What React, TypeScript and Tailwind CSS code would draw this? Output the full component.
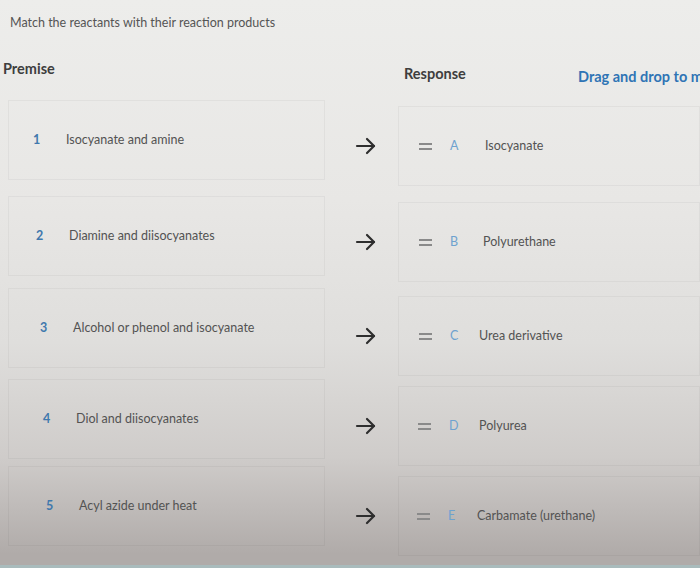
import React from "react";

type Row = {
  n: string;
  premise: string;
  letter: string;
  response: string;
  rowH: string;
  prePl: string;
  respMt: string;
  eqPl: string;
  letterW: string;
};

const rows: Row[] = [
  { n: "1", premise: "Isocyanate and amine", letter: "A", response: "Isocyanate", rowH: "h-[96px]", prePl: "pl-[24px]", respMt: "mt-[6px]", eqPl: "pl-[20px]", letterW: "w-[35px]" },
  { n: "2", premise: "Diamine and diisocyanates", letter: "B", response: "Polyurethane", rowH: "h-[92px]", prePl: "pl-[27px]", respMt: "mt-[6px]", eqPl: "pl-[20px]", letterW: "w-[33px]" },
  { n: "3", premise: "Alcohol or phenol and isocyanate", letter: "C", response: "Urea derivative", rowH: "h-[91px]", prePl: "pl-[31px]", respMt: "mt-[8px]", eqPl: "pl-[20px]", letterW: "w-[29px]" },
  { n: "4", premise: "Diol and diisocyanates", letter: "D", response: "Polyurea", rowH: "h-[87px]", prePl: "pl-[34px]", respMt: "mt-[7px]", eqPl: "pl-[19px]", letterW: "w-[30px]" },
  { n: "5", premise: "Acyl azide under heat", letter: "E", response: "Carbamate (urethane)", rowH: "h-[80px]", prePl: "pl-[37px]", respMt: "mt-[10px]", eqPl: "pl-[18px]", letterW: "w-[29px]" },
];

function Arrow() {
  return (
    <svg width="22" height="20" viewBox="0 0 22 20" fill="none" stroke="#2e2e2e" strokeWidth="2.2" strokeLinecap="round" strokeLinejoin="round">
      <line x1="2" y1="10" x2="19" y2="10" />
      <polyline points="12,3 19,10 12,17" />
    </svg>
  );
}

function Handle() {
  return (
    <div className="flex flex-col gap-[3px] w-[13px]">
      <div className="h-[2px] bg-[#8a8a8a]" />
      <div className="h-[2px] bg-[#8a8a8a]" />
    </div>
  );
}

export default function App() {
  return (
    <div
      className="w-[700px] h-[571px] overflow-hidden flex flex-col bg-[linear-gradient(180deg,#ededeb_0%,#e8e7e5_35%,#dfdedc_60%,#cfccca_80%,#b0aba9_97%)] text-[#555]"
      style={{ fontFamily: "Lato, 'Open Sans', sans-serif" }}
    >
      <div className="pl-[10px] pt-[15px] text-[12.5px] leading-[16px] text-[#555]">
        Match the reactants with their reaction products
      </div>

      <div className="flex items-start mt-[29px] whitespace-nowrap font-bold text-[14.5px] leading-[18px]">
        <div className="pl-[3px] w-[404px] shrink-0 text-[#3e3e3e]">Premise</div>
        <div className="mt-[5px] w-[174px] shrink-0 text-[#3e3e3e]">Response</div>
        <div className="mt-[8px] text-[#2f74b5]">Drag and drop to match</div>
      </div>

      <div className="flex flex-col mt-[14px]">
        {rows.map((r) => (
          <div key={r.n} className={`flex items-start ${r.rowH}`}>
            <div className={`ml-[8px] w-[317px] h-[80px] border border-black/[0.04] flex items-center ${r.prePl} text-[12.5px]`}>
              <span className="w-[33px] font-bold text-[#3f78ad]">{r.n}</span>
              <span className="text-[#535353]">{r.premise}</span>
            </div>
            <div className={`flex ${r.respMt}`}>
              <div className="w-[73px] h-[80px] flex items-center pl-[30px]">
                <Arrow />
              </div>
              <div className={`w-[302px] h-[80px] border border-black/[0.04] flex items-center ${r.eqPl} text-[12.5px]`}>
                <div className="w-[31px]">
                  <Handle />
                </div>
                <span className={`${r.letterW} text-[#6ea2cf]`}>{r.letter}</span>
                <span className="text-[#535353]">{r.response}</span>
              </div>
            </div>
          </div>
        ))}
      </div>

      <div className="flex-1" />
      <div className="h-[3px] bg-[#a9bbbc] shrink-0" />
      <div className="h-[3px] bg-white shrink-0" />
    </div>
  );
}
